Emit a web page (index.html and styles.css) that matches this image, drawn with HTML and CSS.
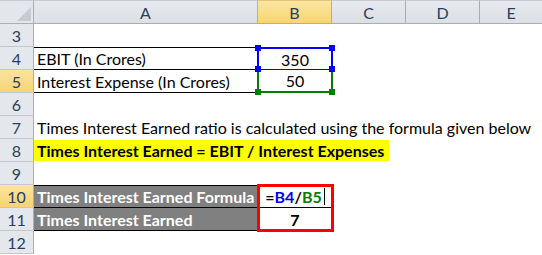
FILE: index.html
```
<!DOCTYPE html>
<html>
<head>
<meta charset="utf-8">
<link rel="stylesheet" href="styles.css">
</head>
<body>
<div class="sheet">
  <div class="ch corner"><svg class="tri" width="14" height="14" viewBox="0 0 14 14"><polygon points="14,0 14,14 0,14" fill="#c6cbd2"/></svg></div>
  <div class="ch">A</div>
  <div class="ch sel">B</div>
  <div class="ch">C</div>
  <div class="ch">D</div>
  <div class="ch last">E</div>

  <div class="rh">3</div><div class="c"></div><div class="c"></div><div class="c"></div><div class="c"></div><div class="c"></div>

  <div class="rh">4</div>
  <div class="c txt bt bb">EBIT (In Crores)</div>
  <div class="c num ref blue">350<i class="h tl"></i><i class="h tr"></i><i class="h bl"></i><i class="h br"></i></div>
  <div class="c"></div><div class="c"></div><div class="c"></div>

  <div class="rh hl">5</div>
  <div class="c txt bb">Interest Expense (In Crores)</div>
  <div class="c num ref green">50<i class="h bl"></i><i class="h br"></i></div>
  <div class="c"></div><div class="c"></div><div class="c"></div>

  <div class="rh">6</div><div class="c"></div><div class="c"></div><div class="c"></div><div class="c"></div><div class="c"></div>

  <div class="rh">7</div>
  <div class="c txt over">Times Interest Earned ratio is calculated using the formula given below</div>
  <div class="c"></div><div class="c"></div><div class="c"></div><div class="c"></div>

  <div class="rh">8</div>
  <div class="c over"><span class="mark">Times Interest Earned = EBIT / Interest Expenses</span></div>
  <div class="c"></div><div class="c"></div><div class="c"></div><div class="c"></div>

  <div class="rh">9</div><div class="c"></div><div class="c"></div><div class="c"></div><div class="c"></div><div class="c"></div>

  <div class="rh hl">10</div>
  <div class="c txt dark bt bb">Times Interest Earned Formula</div>
  <div class="c num bold formula bb"><span class="k">=</span><span class="b4">B4</span><span class="k">/</span><span class="b5">B5</span><span class="caret"></span></div>
  <div class="c"></div><div class="c"></div><div class="c"></div>

  <div class="rh">11</div>
  <div class="c txt dark bb">Times Interest Earned</div>
  <div class="c num bold">7</div>
  <div class="c"></div><div class="c"></div><div class="c"></div>

  <div class="rh">12</div><div class="c"></div><div class="c"></div><div class="c"></div><div class="c"></div><div class="c"></div>

  <div class="redbox"></div>
</div>
</body>
</html>
```

FILE: styles.css
```
html, body {
  margin: 0;
  padding: 0;
  background: #ffffff;
}

.sheet {
  position: relative;
  display: grid;
  grid-template-columns: 34px 224px 74px 74px 74px 62px;
  grid-template-rows: 24px repeat(10, 23px);
  width: 542px;
  font-family: Lato, "Open Sans", sans-serif;
  font-size: 16px;
  color: #000;
}

.ch {
  box-sizing: border-box;
  background: linear-gradient(#e6e9ee, #dcdfe4);
  border-top: 1px solid #c8ccd2;
  border-right: 1px solid #a9aeb5;
  border-bottom: 1px solid #a9aeb5;
  color: #27415f;
  display: flex;
  align-items: center;
  justify-content: center;
  font-size: 16px;
}

.ch.corner {
  position: relative;
  background: #e3e6ea;
  border-right: 1px solid #a9aeb5;
}

.tri {
  position: absolute;
  right: 2px;
  bottom: 2px;
}

.ch.sel {
  background: linear-gradient(#fbe6a0, #f8d570);
  border-right: 1px solid #e0a848;
  border-bottom: 1px solid #e0a848;
  border-left: 1px solid #e0a848;
  border-top: 1px solid #e6c27a;
  margin-left: -1px;
}

.ch.last {
  border-right: none;
}

.rh {
  box-sizing: border-box;
  background: #e4e7eb;
  border-right: 1px solid #a9aeb5;
  border-bottom: 1px solid #c4c8ce;
  color: #27415f;
  display: flex;
  align-items: center;
  justify-content: center;
  font-size: 16px;
}

.rh.hl {
  background: linear-gradient(#fbe2a0, #f8d474);
  border-right: 1px solid #e0a848;
}

.c {
  box-sizing: border-box;
  position: relative;
  display: flex;
  align-items: center;
  white-space: nowrap;
}

.txt {
  padding-left: 3px;
}

.over {
  overflow: visible;
  z-index: 1;
}

.bt {
  border-top: 1px solid #000;
}

.bb {
  border-bottom: 1px solid #000;
}

.num {
  justify-content: center;
}

.bold {
  font-weight: 700;
}

.ref {
  margin-left: -1px;
  margin-right: -1px;
}

.ref.blue {
  border: 2px solid #0000ff;
  border-bottom-width: 1px;
}

.ref.green {
  border: 2px solid #008000;
  border-top: none;
}

.h {
  position: absolute;
  width: 6px;
  height: 6px;
}

.blue .h {
  background: #0000ff;
}

.green .h {
  background: #008000;
}

.h.tl { left: -4px; top: -4px; }
.h.tr { right: -4px; top: -4px; }
.h.bl { left: -4px; bottom: -4px; }
.h.br { right: -4px; bottom: -4px; }

.blue .h.bl { bottom: -3px; z-index: 2; }
.blue .h.br { bottom: -3px; z-index: 2; }

.mark {
  background: #ffff00;
  font-weight: 700;
  height: 21px;
  display: flex;
  align-items: center;
  padding: 0 5px 0 3px;
}

.dark {
  background: #808080;
  color: #ffffff;
  font-weight: 700;
}

.formula .k { color: #000; }
.formula .b4 { color: #0000ff; }
.formula .b5 { color: #008000; }

.caret {
  display: inline-block;
  width: 1px;
  height: 17px;
  background: #000;
  margin-left: 2px;
}

.redbox {
  position: absolute;
  left: 257px;
  top: 184px;
  width: 77px;
  height: 48px;
  box-sizing: border-box;
  border: 3px solid #ff0000;
  pointer-events: none;
}
```
